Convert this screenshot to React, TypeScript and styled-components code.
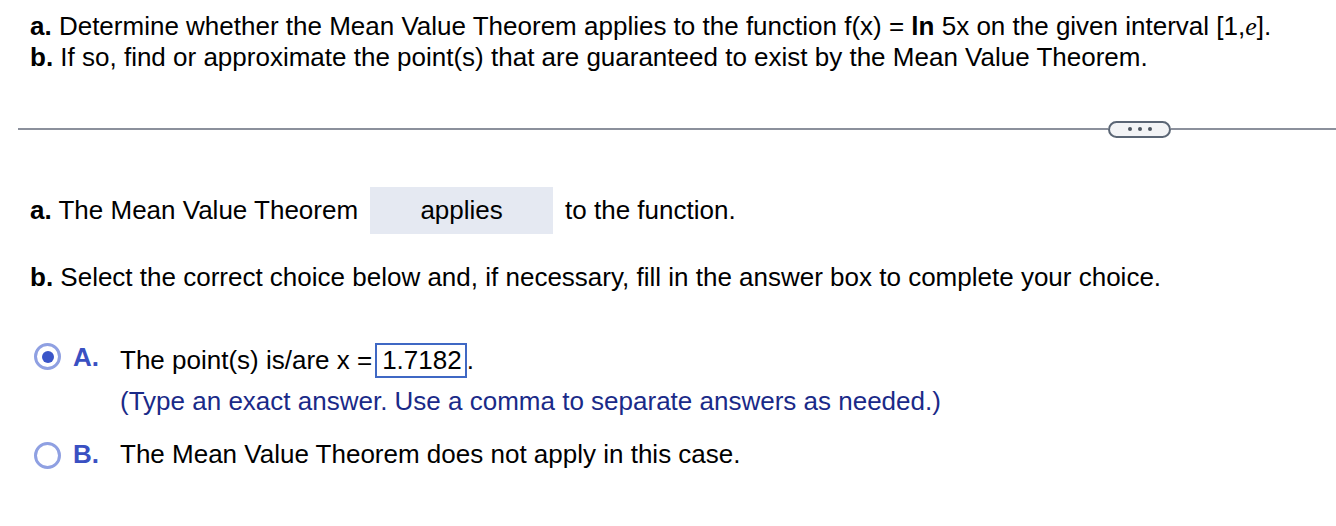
import styled, { createGlobalStyle } from "styled-components";

const GlobalStyle = createGlobalStyle`
  body {
    margin: 0;
    background: #ffffff;
    font-family: "Liberation Sans", Arial, Helvetica, sans-serif;
    color: #000000;
  }
`;

const Page = styled.div`
  width: 1336px;
  height: 526px;
  overflow: hidden;
`;

const Question = styled.div`
  padding: 11px 0 0 30px;
  font-size: 26px;
  line-height: 31px;
`;

const Bold = styled.b`
  font-weight: bold;
`;

const Italic = styled.i`
  font-family: "Liberation Serif", "Times New Roman", serif;
  font-style: italic;
`;

const Divider = styled.div`
  display: flex;
  align-items: center;
  height: 20px;
  margin-top: 46px;
  padding-left: 18px;
`;

const Rule = styled.div<{ $width?: number }>`
  height: 2px;
  background: #8b909c;
  ${(p) => (p.$width ? `width: ${p.$width}px;` : "flex: 1;")}
`;

const MorePill = styled.button`
  display: flex;
  align-items: center;
  justify-content: center;
  gap: 6px;
  width: 63px;
  height: 17px;
  padding: 0;
  box-sizing: border-box;
  border: 2px solid #5b6675;
  border-radius: 9px;
  background: #f3f4f6;
`;

const Dot = styled.span`
  width: 4px;
  height: 4px;
  border-radius: 50%;
  background: #4d5560;
`;

const Body = styled.div`
  padding-left: 30px;
  font-size: 26px;
`;

const AnswerRow = styled.div`
  display: flex;
  align-items: center;
  gap: 12px;
  height: 47px;
  margin-top: 48px;
`;

const Dropdown = styled.div`
  display: flex;
  align-items: center;
  justify-content: center;
  width: 183px;
  height: 47px;
  background: #e5e9f2;
`;

const Prompt = styled.div`
  margin-top: 28px;
  line-height: 31px;
`;

const Choice = styled.div<{ $top: number }>`
  display: flex;
  align-items: flex-start;
  margin-top: ${(p) => p.$top}px;
  padding-left: 4px;
`;

const Radio = styled.span<{ $checked?: boolean; $offset: number }>`
  flex: none;
  width: 27px;
  height: 27px;
  margin-top: ${(p) => p.$offset}px;
  box-sizing: border-box;
  border-radius: 50%;
  border: 3px solid #8fa0e2;
  display: flex;
  align-items: center;
  justify-content: center;
  filter: blur(0.5px);

  &::after {
    content: "";
    width: 12px;
    height: 12px;
    border-radius: 50%;
    background: #3a55c8;
    display: ${(p) => (p.$checked ? "block" : "none")};
  }
`;

const Letter = styled.span<{ $lh: number }>`
  flex: none;
  width: 47px;
  margin-left: 12px;
  font-weight: bold;
  color: #3a50c2;
  line-height: ${(p) => p.$lh}px;
`;

const ChoiceContent = styled.div`
  display: flex;
  flex-direction: column;
`;

const ChoiceLine = styled.div<{ $lh: number }>`
  display: flex;
  align-items: center;
  line-height: ${(p) => p.$lh}px;
  white-space: pre;
`;

const AnswerBox = styled.span`
  display: inline-flex;
  align-items: center;
  height: 35px;
  box-sizing: border-box;
  padding: 0 3px 0 5px;
  margin-left: 3px;
  border: 2px solid #3f68c4;
`;

const Hint = styled.div`
  color: #1a2a88;
  line-height: 31px;
  margin-top: 8px;
`;

export default function App() {
  return (
    <Page>
      <GlobalStyle />
      <Question>
        <div>
          <Bold>a.</Bold> Determine whether the Mean Value Theorem applies to the
          function f(x) = <Bold>ln</Bold> 5x on the given interval [1,<Italic>e</Italic>].
        </div>
        <div>
          <Bold>b.</Bold> If so, find or approximate the point(s) that are guaranteed
          to exist by the Mean Value Theorem.
        </div>
      </Question>

      <Divider>
        <Rule $width={1090} />
        <MorePill aria-label="more">
          <Dot />
          <Dot />
          <Dot />
        </MorePill>
        <Rule />
      </Divider>

      <Body>
        <AnswerRow>
          <span>
            <Bold>a.</Bold> The Mean Value Theorem
          </span>
          <Dropdown>applies</Dropdown>
          <span>to the function.</span>
        </AnswerRow>

        <Prompt>
          <Bold>b.</Bold> Select the correct choice below and, if necessary, fill in
          the answer box to complete your choice.
        </Prompt>

        <Choice $top={50}>
          <Radio $checked $offset={0} />
          <Letter $lh={29}>A.</Letter>
          <ChoiceContent>
            <ChoiceLine $lh={35}>
              The point(s) is/are x =<AnswerBox>1.7182</AnswerBox>.
            </ChoiceLine>
            <Hint>(Type an exact answer. Use a comma to separate answers as needed.)</Hint>
          </ChoiceContent>
        </Choice>

        <Choice $top={22}>
          <Radio $offset={3} />
          <Letter $lh={31}>B.</Letter>
          <ChoiceLine $lh={31}>The Mean Value Theorem does not apply in this case.</ChoiceLine>
        </Choice>
      </Body>
    </Page>
  );
}
